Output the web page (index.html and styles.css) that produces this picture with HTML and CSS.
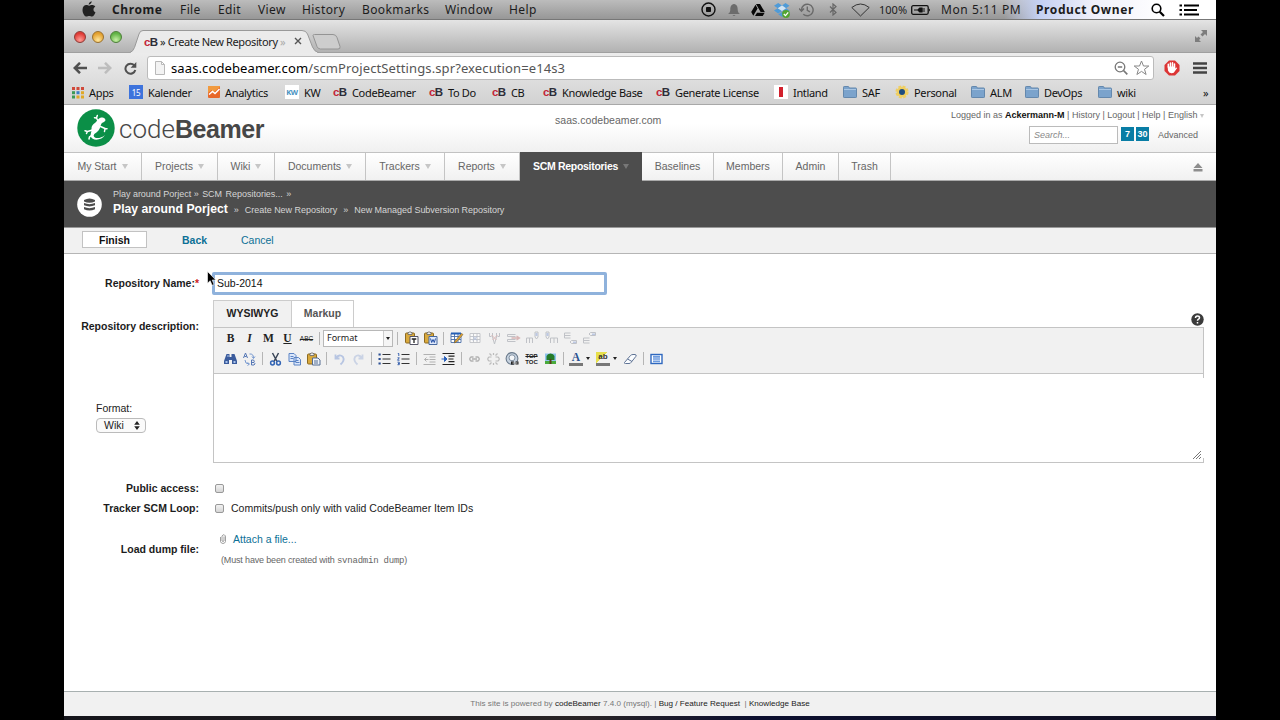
FILE: index.html
```html
<!DOCTYPE html>
<html lang="en">
<head>
    <meta charset="UTF-8">
    <title>Create New Repository</title>
    <link rel="stylesheet" href="styles.css">
</head>
<body>
    <svg class="defs" width="0" height="0">
        <symbol id="folder" viewBox="0 0 14 12">
            <path d="M.5 2V1.2Q.5.5 1.2.5h4q.6 0 .8.7l.3.8h6.5q.7 0 .7.7v8.2q0 .6-.7.6H1.200Q.5 11.500.5 10.900z" fill="#7ba3cc" stroke="#6488ad"/>
            <path d="M1 3.500h12" stroke="#a9c6e3"/>
        </symbol>
        <symbol id="clip" viewBox="0 0 14 14">
            <rect x="1" y="2" width="9" height="10" rx="1" fill="#d9a93c" stroke="#8d6a21"/>
            <path d="M3.500 3.500v-2h1.200L5.500.5l.8 1h1.200v2z" fill="#eee" stroke="#666" stroke-width=".8"/>
        </symbol>
        <symbol id="grid" viewBox="0 0 14 14">
            <path d="M1.500 2.500h10v9h-10zM1.500 5.500h10M1.500 8.500h10M5 2.500v9M8.500 2.500v9" fill="#fff" stroke="currentColor" stroke-width=".9"/>
        </symbol>
    </svg>

    <div class="screen">
        <!-- OS menu bar -->
        <div class="menubar">
            <svg class="apple" width="14" height="16" viewBox="0 0 14 16"><path d="M9.700.3C9.800 2 8.300 3.600 6.700 3.700 6.600 2.100 8.100.5 9.700.3zM10 4.100c-1.300 0-1.900.7-2.800.7S5.400 4.100 4.300 4.100C2.300 4.100.5 5.900.5 8.900c0 3.200 2.200 6.700 3.900 6.700 1 0 1.500-.7 2.800-.7s1.700.7 2.700.7c1.500 0 2.900-2.400 3.600-4.100-2.500-1.200-2.700-4.400-.2-5.900C12.500 4.600 11.300 4.100 10 4.100z" fill="#222"/></svg>
            <b>Chrome</b><span>File</span><span>Edit</span><span>View</span><span>History</span><span>Bookmarks</span><span>Window</span><span>Help</span>
            <div class="status">
                <svg width="15" height="15" viewBox="0 0 15 15"><circle cx="7.500" cy="7.500" r="6.500" fill="none" stroke="#111" stroke-width="1.400"/><rect x="5" y="5" width="5" height="5" rx=".8" fill="#111"/></svg>
                <svg width="14" height="14" viewBox="0 0 14 14"><path d="M7 1C4 1.500 3.300 4 3.300 6.500 3.300 9 2.500 10 1 11h12c-1.500-1-2.300-2-2.300-4.500C10.700 4 10 1.500 7 1zM5.500 12h3Q7 14 5.500 12z" fill="#6c6c6c"/></svg>
                <svg width="14" height="14" viewBox="0 0 14 14"><path d="M5 1h4l4.800 8H9.600zM4.500 1.800 6.600 5.400 2.300 12.800.2 9zM6 9.800h7.700l-2 3.200H4z" fill="#080808"/></svg>
                <svg width="16" height="16" viewBox="0 0 16 16"><path d="M4.200 1 8 3.500 3.800 6.200 0 3.800zM11.500 1 15.500 3.800 12 6.200 8 3.500zM0 8.600l3.800-2.400L8 9l-3.800 2.600zM12 6.200l3.700 2.400-4 3L8 9zM4.200 12.500 8 10l3.700 2.500L8 14.800z" fill="#4e9bd8"/><path d="M3.800 6.200 8 3.500l4 2.700L8 9z" fill="#cfe4f5"/><circle cx="12" cy="12" r="3.900" fill="#54a532"/><path d="M9.800 12l1.700 1.600 2.700-3.200" stroke="#fff" fill="none" stroke-width="1.300"/></svg>
                <svg width="15" height="14" viewBox="0 0 15 14"><path d="M2.500 7A5.800 5.800 0 1 1 4.300 11.200M0 5.500l2.500 2.800L5 5.500M8.300 3.500V7.300l2.700 1.500" fill="none" stroke="#6a6a6a" stroke-width="1.400"/></svg>
                <svg width="8" height="13" viewBox="0 0 8 13"><path d="M1 3.500l6 6L4 12V1l3 2.500-6 6" fill="none" stroke="#666" stroke-width="1.200"/></svg>
                <svg width="19" height="14" viewBox="0 0 19 14"><path d="M.8 4.500Q9.500-2.500 18.200 4.500L9.500 13z" fill="none" stroke="#333"/></svg>
                <span class="percent">100%</span>
                <svg width="20" height="10" viewBox="0 0 20 10"><rect x=".7" y=".7" width="16.500" height="8.600" rx="1.500" fill="none" stroke="#111" stroke-width="1.300"/><path d="M18 3.500q2 1.500 0 3zM3 4.400h3.500l2-2h3v1h2.500v1h-2.500v1h2.500v1h-2.500v1h-3l-2-2H3z" fill="#111"/></svg>
                <span class="clock">Mon 5:11 PM</span>
                <b class="owner">Product Owner</b>
                <svg width="14" height="14" viewBox="0 0 14 14"><circle cx="5.500" cy="5.500" r="4.300" fill="none" stroke="#000" stroke-width="1.600"/><path d="M8.700 8.700l4.300 4.300" stroke="#000" stroke-width="2.200"/></svg>
                <svg width="20" height="12" viewBox="0 0 20 12"><path d="M5 1.500h15M5 6h13M5 10.500h15M.5 1.500h2.500M.5 6h2.500M.5 10.500h2.500" stroke="#000" stroke-width="2.200"/></svg>
            </div>
        </div>

        <!-- browser tab strip -->
        <div class="tabstrip">
            <i class="light red"></i><i class="light yellow"></i><i class="light green"></i>
            <div class="tab">
                <svg class="tab-shape" width="190" height="23" viewBox="0 0 190 23"><path d="M0 22.500q3-1 4.500-5L9 4Q10 .5 13 .5h159q4 0 5.500 3.500l5 13q2 4.500 5.500 5.500v1H0z" fill="#ebebeb" stroke="#999"/><path d="M1 23h186" stroke="#ebebeb" stroke-width="2"/></svg>
                <span class="cb"><i>c</i>B</span>
                <span class="tab-title">» Create New Repository <em>»</em></span>
                <svg class="close" width="8" height="8" viewBox="0 0 8 8"><path d="M1 1l6 6M7 1L1 7" stroke="#555" stroke-width="1.400"/></svg>
            </div>
            <svg class="newtab" width="30" height="16" viewBox="0 0 30 16"><path d="M1 1.500Q1 .5 2.500.5H21q3 0 4 3l3 9q.6 2.500-2 2.500H8.500q-2.500 0-3.500-2.500z" fill="#cdcdcd" stroke="#949494"/></svg>
            <svg class="expand" width="14" height="14" viewBox="0 0 14 14"><path d="M7 1h6v6l-2-2-2.500 2.500-2-2L9 3zM7 13H1V7l2 2 1.500-1.500 2 2L5 11z" fill="#7d7d7d"/></svg>
        </div>

        <div class="toolbar">
            <svg width="14" height="12" viewBox="0 0 14 12"><path d="M14 6H2M7 .8 1.700 6 7 11.200" fill="none" stroke="#505050" stroke-width="2.500"/></svg>
            <svg width="14" height="12" viewBox="0 0 14 12"><path d="M0 6h12M7 .8 12.300 6 7 11.200" fill="none" stroke="#bdbdbd" stroke-width="2.500"/></svg>
            <svg width="13" height="13" viewBox="0 0 13 13"><path d="M10.300 3.500A5 5 0 1 0 11.300 8" fill="none" stroke="#505050" stroke-width="2"/><path d="M12.300 0v5.700H6.600z" fill="#505050"/></svg>
            <div class="omnibox">
                <svg width="10" height="14" viewBox="0 0 10 14"><path d="M.5.500h6l3 3v10h-9zM6.500.5v3h3" fill="#f3f3f3" stroke="#b9b9b9"/></svg>
                <span class="url"><b>saas.codebeamer.com</b>/scmProjectSettings.spr?execution=e14s3</span>
                <svg width="14" height="14" viewBox="0 0 14 14"><circle cx="6" cy="6" r="4.800" fill="none" stroke="#777" stroke-width="1.300"/><path d="M3.800 6h4.400M9.500 9.500l3.800 3.800" stroke="#777" stroke-width="1.700"/></svg>
                <svg width="17" height="16" viewBox="0 0 17 16"><path d="M8.500 1l2 5h5.300l-4.300 3.300 1.600 5.200-4.600-3.100-4.600 3.100 1.600-5.200L1.200 6h5.300z" fill="#fff" stroke="#888"/></svg>
            </div>
            <svg width="16" height="16" viewBox="0 0 16 16"><path d="M5 .5h6L15.500 5v6L11 15.500H5L.5 11V5z" fill="#dc3535"/><path d="M4.300 7V4.300M6.400 7V2.900M8.500 7V2.700M10.500 7.500V4" stroke="#fff" stroke-width="1.500" stroke-linecap="round"/><path d="M3.600 6.500h7.600v2l1.300-.9.700.5L11 11q-1 2.500-3.500 2.300-2.800-.3-3.500-2.800z" fill="#fff"/></svg>
            <svg width="14" height="12" viewBox="0 0 14 12"><path d="M0 1.500h14M0 6h14M0 10.500h14" stroke="#444" stroke-width="2.600"/></svg>
        </div>

        <div class="bookmarks">
            <span><svg width="13" height="13" viewBox="0 0 13 13"><path d="M1 2.500h3M5.500 2.500h3M10 2.500h3" stroke="#d0493a" stroke-width="3"/><path d="M1 6.700h3" stroke="#3d9a56" stroke-width="3"/><path d="M5.500 6.700h3" stroke="#3a7fc6" stroke-width="3"/><path d="M10 6.700h3M5.500 11h3M10 11h3" stroke="#dfa827" stroke-width="3"/><path d="M1 11h3" stroke="#3d9a56" stroke-width="3"/></svg>Apps</span>
            <span><i class="cal">15</i>Kalender</span>
            <span><svg width="12" height="12" viewBox="0 0 12 12"><rect width="12" height="12" rx="1" fill="#e8682a"/><path d="M0 7l3.500-3L6 6l6-5V0H0z" fill="#f19a3e"/><path d="M1 8.500l3.500-3L7 7.500 11.500 3" fill="none" stroke="#fff" stroke-width="1.500"/></svg>Analytics</span>
            <span><i class="kw">KW</i>KW</span>
            <span><span class="cb"><i>c</i>B</span>CodeBeamer</span>
            <span><span class="cb"><i>c</i>B</span>To Do</span>
            <span><span class="cb"><i>c</i>B</span>CB</span>
            <span><span class="cb"><i>c</i>B</span>Knowledge Base</span>
            <span><span class="cb"><i>c</i>B</span>Generate License</span>
            <span><i class="intland"></i>Intland</span>
            <span><svg width="14" height="12"><use href="#folder"/></svg>SAF</span>
            <span><svg width="14" height="14" viewBox="0 0 14 14"><circle cx="7" cy="7" r="5.300" fill="#f0cf62" stroke="#f0cf62" stroke-width="2.600" stroke-dasharray="2.800 1.360"/><circle cx="7" cy="7" r="3" fill="#1d4d80"/></svg>Personal</span>
            <span><svg width="14" height="12"><use href="#folder"/></svg>ALM</span>
            <span><svg width="14" height="12"><use href="#folder"/></svg>DevOps</span>
            <span><svg width="14" height="12"><use href="#folder"/></svg>wiki</span>
            <span class="more">»</span>
        </div>

        <!-- page header -->
        <div class="header">
            <div class="logo">
                <svg width="38" height="38" viewBox="0 0 38 38"><circle cx="19" cy="19" r="18.700" fill="#0b8f47"/><path d="M18.500 13.500C21 11 21.500 9 24 8.500c2.800-.3 5 1.500 4.300 3.200-.7 1.500-2.800 1.300-3.800 2.800-1.300 2.300-.8 4-3 7-1.800 2.500-5 3-4.800 5.300.4 3.200 7 3.200 11.300-.8-3 5.500-13 6.500-14.300 1-.4-2.300 1-3.800.8-7-.1-3 1-4.500 4-6.500z" fill="#fff"/><path d="M21 12l-1.500-3 .8-2.500M19.500 9 17.500 8.700M23.500 17.500l4.500 2-.5 3M28 19.500l2 .2M15.500 21l-5 1.500-2.500-.8M10.500 22.500 9.500 24.500M16.500 25l-4 3-.5 2" fill="none" stroke="#fff" stroke-width="1.500" stroke-linecap="round"/></svg>
                <span class="logo-text"><i>code</i><b>Beamer</b></span>
            </div>
            <div class="host">saas.codebeamer.com</div>
            <div class="user">
                <div class="user-links">Logged in as <b>Ackermann-M</b> | History | Logout | Help | English <i class="caret"></i></div>
                <div class="search">
                    <div class="search-box">Search...</div>
                    <i class="day">7</i><i class="day">30</i>
                    <span>Advanced</span>
                </div>
            </div>
        </div>

        <div class="nav">
            <span>My Start<i class="caret"></i></span>
            <span>Projects<i class="caret"></i></span>
            <span>Wiki<i class="caret"></i></span>
            <span>Documents<i class="caret"></i></span>
            <span>Trackers<i class="caret"></i></span>
            <span>Reports<i class="caret"></i></span>
            <span class="active">SCM Repositories<i class="caret"></i></span>
            <span>Baselines</span>
            <span>Members</span>
            <span>Admin</span>
            <span>Trash</span>
            <svg width="10" height="9" viewBox="0 0 10 9"><path d="M5 0l4.500 5H.5zM.5 6h9v2.500h-9z" fill="#8e8e8e"/></svg>
        </div>

        <div class="breadcrumb">
            <svg width="25" height="25" viewBox="0 0 25 25"><circle cx="12.500" cy="12.500" r="12.300" fill="#fff"/><path d="M7 8q5.500-3 11 0v1.500q-5.500 2.500-11 0zM7 11q5.500 2.300 11 0v2.300q-5.500 2.300-11 0zM7 15q5.500 2.300 11 0v2.300q-5.500 2.500-11 0z" fill="#4d4d4d"/></svg>
            <div class="crumbs">
                <div class="crumb-top">Play around Porject » <span>SCM Repositories... »</span></div>
                <div class="crumb-main"><b>Play around Porject</b><span>»</span><span>Create New Repository</span><span>»</span><span>New Managed Subversion Repository</span></div>
            </div>
        </div>

        <div class="actions">
            <button class="finish">Finish</button>
            <a class="back">Back</a>
            <a>Cancel</a>
        </div>

        <div class="form">
            <div class="row name-row">
                <label>Repository Name:<em>*</em></label>
                <div class="name-input">Sub-2014</div>
                <svg class="pointer" width="10" height="16" viewBox="0 0 10 16"><path d="M.5.500v11.700l2.700-2.500 1.900 4.600 2-.8-1.900-4.500h3.600z" fill="#000" stroke="#fff" stroke-width=".6"/></svg>
            </div>

            <div class="row desc-row">
                <div class="desc-side">
                    <label>Repository description:</label>
                    <div class="format">
                        <span>Format:</span>
                        <div class="format-select">Wiki<svg width="6" height="9" viewBox="0 0 6 9"><path d="M3 0l2.800 3.700H.2zM3 9L.2 5.300h5.600z" fill="#222"/></svg></div>
                    </div>
                </div>
                <div class="editor">
                    <div class="tabs">
                        <span>WYSIWYG</span><span class="on">Markup</span>
                        <svg width="13" height="13" viewBox="0 0 13 13"><circle cx="6.500" cy="6.500" r="6.200" fill="#3b3b3b"/><path d="M4.500 5q0-2 2-2t2 1.700q0 .9-1 1.500T6.500 7.800M6.500 9v1.500" fill="none" stroke="#fff" stroke-width="1.500"/></svg>
                    </div>
                    <div class="tools">
                        <div class="tool-row">
                            <b>B</b><b class="it">I</b><b>M</b><b class="ul">U</b><b class="abc">ABC</b>
                            <i class="sep"></i>
                            <div class="combo">Format<i class="combo-btn"><i class="drop"></i></i></div>
                            <i class="sep"></i>
                            <svg viewBox="0 0 14 14"><use href="#clip"/><path d="M5.500 5.500h8v8h-8z" fill="#fff" stroke="#556"/><path d="M7.200 8h4.600M9.500 8v4" stroke="#222" stroke-width="1.300"/></svg>
                            <svg viewBox="0 0 14 14"><use href="#clip"/><path d="M5.500 5.500h8v8h-8z" fill="#dfe9fb" stroke="#47689f"/><path d="M7 7.500l1.200 4 1.300-3 1.300 3 1.200-4" fill="none" stroke="#2550a5"/></svg>
                            <i class="sep"></i>
                            <svg class="navy" viewBox="0 0 14 14"><use href="#grid"/><path d="M1.500 2.500h10" stroke="#245fb5" stroke-width="2"/><path d="M5.500 10l6.500-7.500 1.500 1L7 11l-2 1z" fill="#e5a839" stroke="#755a21" stroke-width=".6"/></svg>
                            <svg class="faint" viewBox="0 0 14 14"><use href="#grid"/><path d="M4.500 5.500l4 4M8.500 5.500l-4 4" stroke="#8aa0cf"/></svg>
                            <svg class="faint" viewBox="0 0 14 14"><path d="M2 2v3.500h2M12 2v3.500h-2M5 2v4l2 7 2-7V2" fill="none" stroke="currentColor"/><path d="M4 4l5 5M10 4L5 9" stroke="#d29898"/></svg>
                            <svg class="faint" viewBox="0 0 14 14"><path d="M1 3.500h8M1 10.500h8M1 3.500v2h8M1 10.500v-2h8" fill="none" stroke="currentColor"/><path d="M5 7h8M10 5l3 2-3 2" fill="none" stroke="#c98f8f" stroke-width="1.300"/></svg>
                            <svg class="faint" viewBox="0 0 14 14"><path d="M1 12V7h6v5M4 7v5M9.500 1h3v5l-1.500 2-1.500-2z" fill="none" stroke="currentColor"/><path d="M10 2h2v3h-2z" fill="#9aaedb"/></svg>
                            <svg class="faint" viewBox="0 0 14 14"><path d="M6 12V7h7v5M9.500 7v5M1.500 1h3v5L3 8 1.500 6z" fill="none" stroke="currentColor"/><path d="M2 2h2v3H2z" fill="#9aaedb"/></svg>
                            <svg class="faint" viewBox="0 0 14 14"><path d="M7 2H1v5h6M1 4.500h6M8 9.500h5v3H8L6.500 11z" fill="none" stroke="currentColor"/><path d="M9.500 10.500h3v1.500h-3z" fill="#9aaedb"/></svg>
                            <svg class="faint" viewBox="0 0 14 14"><path d="M7 12H1V7h6M1 9.500h6M8 1.500h5v3H8L6.500 3z" fill="none" stroke="currentColor"/><path d="M9.500 2.500h3V4h-3z" fill="#9aaedb"/></svg>
                        </div>
                        <div class="tool-row">
                            <svg viewBox="0 0 14 14"><path d="M3 2h3v3h2V2h3l2.500 7v3h-5V8h-3v4h-5V9z" fill="#3a5b9c"/><path d="M2 9h2v2H2zM10 9h2v2h-2zM4 3h1v2H4z" fill="#a9c4ec"/></svg>
                            <svg viewBox="0 0 14 14"><path d="M1 6l2-5 2 5M2 4.500h2M9 8v5h2.500q2-1.200 0-2.500H9 11q1.700-1.200 0-2.500z" fill="none" stroke="#5577b5"/><path d="M7 2q4-.5 4 4M9.500 4.500L11 6.500 12.500 4.500M2.500 8q0 4 4 4M5 10.500L7 12 5 13.500" fill="none" stroke="#7799d0"/></svg>
                            <i class="sep"></i>
                            <svg viewBox="0 0 14 14"><path d="M4 1l4.500 8.500M10 1L5.500 9.500" stroke="#3a4658" stroke-width="1.500"/><circle cx="4" cy="11" r="1.900" fill="none" stroke="#3466b5" stroke-width="1.500"/><circle cx="10" cy="11" r="1.900" fill="none" stroke="#3466b5" stroke-width="1.500"/></svg>
                            <svg viewBox="0 0 14 14"><path d="M1.500 1.500h5l2 2v6h-7zM6.500 5.500h4.500l2 2v5.500H6.500z" fill="#dbe7fb" stroke="#5b83c4"/><path d="M3 4.500h3M3 6.500h3M8 8.500h3M8 10.500h4" stroke="#5b83c4"/></svg>
                            <svg viewBox="0 0 14 14"><use href="#clip"/><path d="M6 6h5.500l2 2v5H6z" fill="#eef3fb" stroke="#556c91"/><path d="M7.500 9h4M7.500 11h4" stroke="#556c91"/></svg>
                            <i class="sep"></i>
                            <svg viewBox="0 0 14 14"><path d="M3 2.500v4h4M3.500 6Q7 1.500 10.500 5q2 3.500-2.500 7.500" fill="none" stroke="#b7c5e2" stroke-width="1.800"/></svg>
                            <svg viewBox="0 0 14 14"><path d="M11 2.500v4H7M10.500 6Q7 1.500 3.500 5q-2 3.500 2.500 7.500" fill="none" stroke="#cad3e5" stroke-width="1.800"/></svg>
                            <i class="sep"></i>
                            <svg viewBox="0 0 14 14"><path d="M5 2.500h8M5 7h8M5 11.500h8" stroke="#333"/><path d="M1 2.500h2.200M1 7h2.200M1 11.500h2.200" stroke="#2b4f94" stroke-width="2"/></svg>
                            <svg viewBox="0 0 14 14"><path d="M5 2.500h8M5 7h8M5 11.500h8" stroke="#333"/><path d="M1.300 1.500h1v2.500M1 5.800h1.800L1 8.200h2M1 10.200h1.800v2.500H1M1.500 11.500h1.300" fill="none" stroke="#2855a8" stroke-width=".9"/></svg>
                            <i class="sep"></i>
                            <svg class="faint" viewBox="0 0 14 14"><path d="M1 2.500h12M7 5h6M7 7.500h6M7 10h6M1 12.500h12M6 7.500H2M4 5.500L2 7.500l2 2" fill="none" stroke="#888"/></svg>
                            <svg viewBox="0 0 14 14"><path d="M1 1.500h12M7 4.200h6M7 7h5M7 9.700h6M1 12.500h12" stroke="#222" stroke-width="1.200"/><path d="M0 7h4M3 4.500L5.500 7 3 9.500z" fill="#2c62bb" stroke="#2c62bb"/></svg>
                            <i class="sep"></i>
                            <svg class="faint" viewBox="0 0 14 14"><path d="M6 5H3.500Q1 7 3.500 9H6M8 5h2.500Q13 7 10.500 9H8M4.500 7h5" fill="none" stroke="#888" stroke-width="1.400"/></svg>
                            <svg class="faint" viewBox="0 0 14 14"><path d="M5 5H2.500Q0 7 2.500 9H5M9 5h2.500Q14 7 11.500 9H9M3 1.500l2 2M11 1.500l-2 2M7 1v2M3 12.500l2-2M11 12.500l-2-2M7 13v-2" fill="none" stroke="#999" stroke-width="1.200"/></svg>
                            <svg viewBox="0 0 14 14"><circle cx="6.500" cy="6.500" r="5.900" fill="#c6d2df" stroke="#6b7b8c" stroke-width="1.100"/><circle cx="6.500" cy="5.800" r="3" fill="#f4f6f8" stroke="#8090a2"/><path d="M5.500 11h3M10 11h3" stroke="#222" stroke-width="3"/><path d="M7 11h5" stroke="#bbb" stroke-width="1.200"/></svg>
                            <b class="toc"><i>TOP</i>TOC</b>
                            <svg viewBox="0 0 14 14"><path d="M1.500 1.500h11v10h-11z" fill="#8fc3ee"/><path d="M3 8V4q1-2.500 4-2.500T11 4v4z" fill="#257c29"/><path d="M1.500 9h11v3h-11z" fill="#4aab3c"/><path d="M7 7v5" stroke="#5a3c1a" stroke-width="2"/></svg>
                            <i class="sep"></i>
                            <b class="color-a">A</b><i class="drop"></i>
                            <b class="color-b">ab</b><i class="drop"></i>
                            <svg viewBox="0 0 14 14"><path d="M1 10.500L7 3.500Q8 2.500 9.500 2.500h2q2 .2.800 2L7.500 10.500Q7 11.500 5.500 11.500H2Q.5 11.500 1 10.500zM4 7l4.500 2.500" fill="#fbfdff" stroke="#5f7395"/></svg>
                            <i class="sep"></i>
                            <svg viewBox="0 0 14 14"><rect x="1.500" y="2.500" width="11" height="9" fill="#fff" stroke="#2f68bf" stroke-width="1.400"/><path d="M3.500 4.500h7M3.500 6.200h7M3.500 7.900h7M3.500 9.600h7" stroke="#6c9be0" stroke-width="1.300"/></svg>
                        </div>
                    </div>
                    <div class="content">
                        <svg width="10" height="10" viewBox="0 0 10 10"><path d="M1 9l8-8M4 9l5-5M7 9l2-2" stroke="#777"/></svg>
                    </div>
                </div>
            </div>

            <div class="row check-row">
                <label>Public access:</label>
                <i class="box"></i>
            </div>
            <div class="row check-row">
                <label>Tracker SCM Loop:</label>
                <i class="box"></i><span>Commits/push only with valid CodeBeamer Item IDs</span>
            </div>
            <div class="row dump-row">
                <label>Load dump file:</label>
                <div class="dump">
                    <div class="attach"><svg width="6" height="10" viewBox="0 0 6 10"><path d="M4 2.500v4.500q-1 1-2 0V2Q3 0 4.500 1 5.500 1.500 5.500 3v4.500q-.5 2-2.500 2T.5 7.500V3" fill="none" stroke="#888" stroke-width=".8"/></svg><a>Attach a file...</a></div>
                    <div class="hint">(Must have been created with <code>svnadmin dump</code>)</div>
                </div>
            </div>
        </div>

        <div class="footer">This site is powered by <b>codeBeamer</b> 7.4.0 (mysql). | <b>Bug / Feature Request</b>&nbsp; | <b>Knowledge Base</b></div>
        <div class="desktop"></div>
    </div>
</body>
</html>
```
FILE: styles.css
```css
* {
    box-sizing: border-box;
}
body {
    margin: 0;
    background: #000;
    font-family: "Liberation Sans", Arial, sans-serif;
    font-size: 10.5px;
    color: #222;
    overflow: hidden;
}
svg {
    display: block;
    flex: none;
}
i, em {
    font-style: normal;
}
.defs {
    position: absolute;
}
.screen {
    width: 1152px;
    height: 720px;
    margin: 0 auto;
    background: #fff;
    display: flex;
    flex-direction: column;
    white-space: nowrap;
}
.screen > div {
    flex: none;
}

/* menu bar */
.menubar {
    height: 20px;
    display: grid;
    grid-template-columns: 30px 68px 38px 40px 44px 60px 83px 64px 192px 1fr;
    align-items: center;
    padding-left: 18px;
    background: linear-gradient(90deg, rgba(255,255,255,0) 940px, #c4d0f2 975px, #f0f0fa 1030px, #fff 1100px), linear-gradient(#bcbcbc, #979797);
    border-bottom: 1px solid #777;
    font-family: "Noto Sans", sans-serif;
    font-size: 12px;
    color: #1c1c1c;
    letter-spacing: .4px;
}
.menubar b {
    letter-spacing: .6px;
}
.apple {
    margin-top: -1px;
}
.status {
    display: flex;
    align-items: center;
}
.status svg:nth-of-type(2) { margin-left: 11px; }
.status svg:nth-of-type(3) { margin-left: 10px; }
.status svg:nth-of-type(4) { margin-left: 9px; }
.status svg:nth-of-type(5) { margin-left: 9px; }
.status svg:nth-of-type(6) { margin-left: 15px; }
.status svg:nth-of-type(7) { margin-left: 14px; }
.percent {
    width: 32px;
    margin-left: 9px;
    font-size: 11px;
    letter-spacing: 0;
}
.clock {
    width: 95px;
    margin-left: 10px;
    letter-spacing: .6px;
}
.owner {
    width: 115px;
}
.status svg:last-child {
    margin-left: 14px;
}

/* tab strip */
.tabstrip {
    height: 33px;
    display: flex;
    align-items: center;
    padding-left: 10px;
    background: linear-gradient(#e4e4e4, #b2b2b2);
    border-bottom: 1px solid #a0a0a0;
}
.light {
    width: 12px;
    height: 12px;
    margin: 1px 6px 0 0;
    border-radius: 50%;
    border: 1px solid #8d3b36;
}
.red { background: radial-gradient(circle at 50% 80%, #ff9f97, #e03b36 70%); }
.yellow { background: radial-gradient(circle at 50% 80%, #ffe69b, #e3a02e 70%); border-color: #99702e; }
.green { background: radial-gradient(circle at 50% 80%, #c7f0a5, #61b345 70%); border-color: #4d7f39; }
.tab {
    position: relative;
    width: 188px;
    height: 23px;
    margin: 11px 0 0 2px;
    padding-left: 14px;
    display: flex;
    align-items: center;
}
.tab-shape {
    position: absolute;
    left: 0;
    top: 0;
}
.tab > :not(.tab-shape) {
    position: relative;
}
.cb {
    width: 14px;
    font: bold 11.5px/14px "Liberation Sans", sans-serif;
    letter-spacing: -.6px;
    color: #2d2d38;
}
.cb i {
    color: #c2263a;
}
.tab-title {
    width: 134px;
    margin-left: 2px;
    font-family: "Noto Sans", sans-serif;
    font-size: 11px;
    letter-spacing: -.38px;
    color: #222;
}
.tab-title em {
    color: #aaa;
}
.close {
    margin-top: -1px;
}
.newtab {
    margin: 11px 0 0 -6px;
}
.expand {
    margin-left: auto;
    margin-right: 8px;
}

/* toolbar */
.toolbar {
    height: 27px;
    display: flex;
    align-items: center;
    padding: 3px 9px 0 9px;
    background: linear-gradient(#ececec, #dedede);
}
.toolbar > svg:nth-of-type(2) { margin-left: 11px; }
.toolbar > svg:nth-of-type(3) { margin-left: 12px; }
.toolbar > svg:nth-of-type(4) { margin-left: 10px; }
.toolbar > svg:nth-of-type(5) { margin-left: 13px; }
.omnibox {
    width: 1008px;
    height: 24px;
    margin-left: 10px;
    padding: 0 3px 0 7px;
    display: flex;
    align-items: center;
    background: #fff;
    border: 1px solid #bbb;
    border-radius: 3px;
    font-family: "Noto Sans", sans-serif;
    font-size: 13px;
    color: #555;
}
.url {
    margin-left: 6px;
    margin-right: auto;
    letter-spacing: .11px;
}
.url b {
    font-weight: normal;
    color: #000;
}
.omnibox svg:last-child {
    margin-left: 5px;
}
.bookmarks {
    height: 25px;
    display: grid;
    grid-template-columns: 58px 79px 77px 48px 96px 63px 51px 113px 118px 69px 52px 76px 54px 73px 104px auto;
    padding-left: 7px;
    background: linear-gradient(#dedede, #d2d2d2);
    border-bottom: 1px solid #a8a8a8;
    font-family: "Noto Sans", sans-serif;
    font-size: 11px;
    letter-spacing: -.33px;
    color: #111;
}
.bookmarks > span {
    display: flex;
    align-items: center;
    gap: 5px;
}
.bookmarks .more {
    padding-left: 1px;
}
.cal, .kw, .intland {
    width: 14px;
    height: 14px;
    font-size: 8px;
    line-height: 15px;
    text-align: center;
    color: #fff;
    background: #3d73dc;
}
.kw {
    font-size: 7.5px;
    font-weight: bold;
    color: #4791bf;
    background: #fff;
}
.intland {
    background: linear-gradient(90deg, #fff 5px, #d2202c 5px, #d2202c 9px, #fff 9px);
    border: 2px solid #fff;
    border-width: 2px 0;
}

/* page header */
.header {
    height: 47px;
    display: flex;
    padding-left: 13px;
    background: linear-gradient(#fff 40%, #f0f0f0);
    color: #666;
}
.logo {
    width: 478px;
    display: flex;
    padding-top: 4px;
}
.logo-text {
    margin: 5px 0 0 4px;
    line-height: 30px;
    color: #474747;
}
.logo-text i {
    font-family: Roboto, sans-serif;
    font-size: 26px;
    font-weight: 300;
}
.logo-text b {
    font-size: 25px;
    letter-spacing: -.4px;
}
.host {
    padding-top: 9px;
    letter-spacing: .04px;
}
.user {
    width: 265px;
    margin-left: auto;
    padding-top: 5px;
    font-size: 9px;
}
.user-links b {
    color: #111;
}
.search {
    display: flex;
    align-items: center;
    margin: 6px 0 0 78px;
}
.search-box {
    width: 89px;
    height: 18px;
    padding-left: 4px;
    margin-right: 3px;
    border: 1px solid #bbb;
    background: #fff;
    line-height: 16px;
    font-style: italic;
    color: #888;
}
.day {
    width: 13px;
    height: 14px;
    margin: -2px 2px 0 0;
    background: #087da5;
    color: #fff;
    font-weight: bold;
    line-height: 15px;
    text-align: center;
}
.search span {
    margin: -1px 0 0 7px;
}
.caret {
    display: inline-block;
    border: 3px solid transparent;
    border-top: 5px solid #c6c6c6;
    border-bottom: 0;
    margin: 1px 0 0 5px;
}
.user-links .caret {
    border-width: 4px 2px 0;
    margin-left: 0;
}
.nav {
    height: 29px;
    display: grid;
    grid-template-columns: 78px 76px 57px 91px 79px 75px 122px 72px 69px 56px 52px 1fr;
    background: linear-gradient(#fff, #f1f1f1);
    border-top: 1px solid #c2c2c2;
    border-bottom: 1px solid #aaa;
    color: #666;
}
.nav span {
    display: flex;
    align-items: center;
    justify-content: center;
    padding-bottom: 1px;
    border-right: 1px solid #c4c4c4;
}
.nav span.active {
    background: #4d4d4d;
    color: #fff;
    font-weight: bold;
    letter-spacing: -.3px;
    margin: -1px 0;
    border: 0;
}
.active .caret {
    border-top-color: #777;
}
.nav svg {
    justify-self: end;
    margin: 10px 13px 0 0;
}
.breadcrumb {
    height: 46px;
    display: flex;
    align-items: center;
    gap: 11px;
    padding-left: 13px;
    background: #4d4d4d;
    color: #d5d5d5;
    font-size: 9px;
}
.crumbs {
    margin-top: -3px;
}
.crumb-top {
    margin-bottom: 3px;
    letter-spacing: -.02px;
}
.crumb-top span {
    margin-left: 1px;
    word-spacing: 1px;
}
.crumb-main {
    display: flex;
    align-items: baseline;
    gap: 6px;
    letter-spacing: -.03px;
}
.crumb-main b {
    font-size: 12.2px;
    letter-spacing: .02px;
    color: #fff;
}
.actions {
    height: 27px;
    display: flex;
    align-items: center;
    padding: 0 0 2px 18px;
    background: #f1f1f1;
    border-top: 1px solid #999;
    border-bottom: 1px solid #b5b5b5;
}
.finish {
    width: 65px;
    height: 17px;
    padding: 0;
    background: #fff;
    border: 1px solid #c2c2c2;
    font: bold 10.5px "Liberation Sans", sans-serif;
    color: #111;
}
a {
    color: #0c7096;
}
.back {
    width: 59px;
    margin-left: 35px;
    font-weight: bold;
}

/* form */
.form {
    height: 437px;
    padding-top: 17px;
}
.row {
    display: flex;
    align-items: center;
}
.row label {
    width: 135px;
    margin-right: 14px;
    text-align: right;
    font-weight: bold;
    color: #1c1c1c;
    flex: none;
}
.row label em {
    color: #c22;
}
.name-row {
    position: relative;
    height: 23px;
}
.name-input {
    width: 395px;
    height: 23px;
    margin: 1px 0 0 -1px;
    padding-left: 2px;
    border: 3px solid #8fb2dc;
    border-radius: 2px;
    line-height: 16px;
    color: #111;
}
.pointer {
    position: absolute;
    left: 143px;
    top: 0;
}
.desc-row {
    height: 163px;
    margin-top: 6px;
    align-items: stretch;
}
.desc-side {
    width: 149px;
    padding-top: 20px;
    display: flex;
    flex-direction: column;
}
.format {
    margin: 70px 0 0 32px;
}
.format-select {
    width: 50px;
    height: 15px;
    margin-top: 4px;
    padding: 0 5px 1px 7px;
    display: flex;
    align-items: center;
    justify-content: space-between;
    border: 1px solid #bbb;
    border-radius: 4px;
    background: #fafafa;
}
.editor {
    width: 991px;
    display: flex;
    flex-direction: column;
}
.tabs {
    height: 27px;
    display: flex;
}
.tabs span {
    width: 79px;
    border: 1px solid #ccc;
    border-bottom: 0;
    background: #f1f1f1;
    font-weight: bold;
    line-height: 25px;
    text-align: center;
}
.tabs .on {
    width: 63px;
    margin-left: -1px;
    background: #fff;
    color: #555;
}
.tabs svg {
    margin: 13px 0 0 auto;
}
.tools {
    height: 47px;
    padding: 0 0 5px 7px;
    background: #f1f1f1;
    border: 1px solid #c4c4c4;
}
.tool-row {
    height: 20.5px;
    display: flex;
    align-items: center;
}
.tool-row > svg {
    width: 15px;
    height: 14px;
    margin: 0 2px;
}
.tool-row > b {
    width: 19px;
    text-align: center;
    font-family: "Liberation Serif", serif;
    font-size: 11.5px;
}
.tool-row .it { font-style: italic; }
.tool-row .ul { text-decoration: underline; }
.tool-row .abc {
    font: 6.5px "Liberation Sans", sans-serif;
    text-decoration: line-through;
}
.sep {
    width: 1px;
    height: 13px;
    margin: 0 3px;
    background: #b5b5b5;
}
.combo {
    width: 70px;
    height: 17px;
    margin: 0 1px 0 0;
    padding-left: 3px;
    display: flex;
    justify-content: space-between;
    background: #fff;
    border: 1px solid #b8b8b8;
    font: 9px/14px "Noto Sans", sans-serif;
}
.combo + .sep {
    margin-right: 4px;
}
.combo-btn {
    width: 9px;
    display: flex;
    align-items: center;
    justify-content: center;
    border-left: 1px solid #ccc;
    background: #f5f5f5;
}
.combo .drop {
    margin: 0;
}
.navy { color: #4a6ea8; }
.faint {
    color: #a0a4ac;
    opacity: .6;
}
.tool-row .toc {
    font: bold 6px/6px "Liberation Sans", sans-serif;
}
.toc i {
    display: block;
    text-decoration: line-through;
}
.tool-row .color-a, .tool-row .color-b {
    width: 14px;
    height: 14px;
    margin-left: 2px;
    line-height: 11px;
    color: #29508f;
    border-bottom: 3px solid #777;
}
.tool-row .color-b {
    font: bold 8px/9px "Liberation Sans", sans-serif;
    color: #333;
    background: linear-gradient(135deg, #e7e04d 45%, transparent 45%);
}
.drop {
    margin: 0 4px 0 3px;
    border: 2px solid transparent;
    border-top: 3px solid #222;
    border-bottom: 0;
}
.drop + .color-b {
    margin-left: 2px;
}
.content {
    flex: 1;
    display: flex;
    align-items: flex-end;
    justify-content: flex-end;
    padding: 0 2px 2px 0;
    border: 1px solid #c4c4c4;
    border-width: 0 0 1px 1px;
    background: linear-gradient(#c4c4c4 4px, #fff 4px, #fff 84px, #c4c4c4 84px) right/1px 100% no-repeat;
}
.check-row {
    height: 20px;
}
.desc-row + .check-row {
    margin-top: 15px;
}
.box {
    width: 9px;
    height: 9px;
    margin: 0 7px 0 2px;
    border: 1px solid #999;
    border-radius: 2px;
    background: linear-gradient(#f2f2f2, #d5d5d5);
}
.dump-row {
    margin-top: 14px;
}
.dump {
    padding-top: 1px;
}
.attach {
    display: flex;
    align-items: center;
    gap: 7px;
    padding-left: 7px;
}
.hint {
    margin: 10px 0 -1px 8px;
    font-size: 9px;
    letter-spacing: -.16px;
    color: #666;
}
.hint code {
    font: 9px "Liberation Mono", monospace;
    letter-spacing: -.22px;
}
.footer {
    height: 25px;
    border-top: 1px solid #a8b0b0;
    background: #f1f1f1;
    font-size: 8.1px;
    line-height: 24px;
    text-align: center;
    color: #777;
}
.footer b {
    font-weight: normal;
    color: #222;
}
.desktop {
    height: 4px;
    background: linear-gradient(90deg, #15151b, #2a2527 45%, #0d1030 60%, #101020);
}
```
